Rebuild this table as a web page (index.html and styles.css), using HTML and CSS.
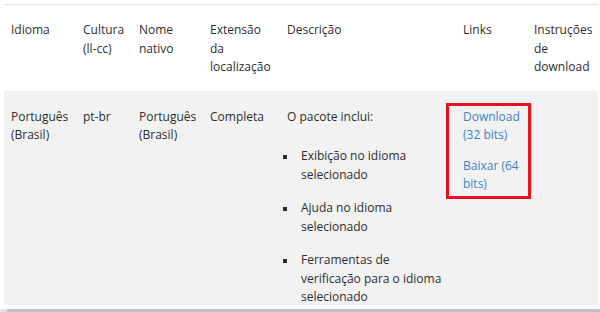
FILE: index.html
```html
<!DOCTYPE html>
<html lang="pt-BR">
<head>
<meta charset="utf-8">
<title>Pacotes de idiomas</title>
<link rel="stylesheet" href="styles.css">
</head>
<body>
<div class="page">
  <div class="viewport">
    <table class="lang-table">
      <colgroup>
        <col class="c-idioma">
        <col class="c-cultura">
        <col class="c-nome">
        <col class="c-ext">
        <col class="c-desc">
        <col class="c-links">
        <col class="c-instr">
      </colgroup>
      <thead>
        <tr>
          <th>Idioma</th>
          <th>Cultura (ll-cc)</th>
          <th>Nome nativo</th>
          <th>Extensão da localização</th>
          <th>Descrição</th>
          <th>Links</th>
          <th>Instruções de download</th>
        </tr>
      </thead>
      <tbody>
        <tr class="row-alt">
          <td>Português (Brasil)</td>
          <td>pt-br</td>
          <td>Português (Brasil)</td>
          <td>Completa</td>
          <td>
            <p class="desc-intro">O pacote inclui:</p>
            <ul class="desc-list">
              <li>Exibição no idioma selecionado</li>
              <li>Ajuda no idioma selecionado</li>
              <li>Ferramentas de verificação para o idioma selecionado</li>
            </ul>
          </td>
          <td class="links-cell">
            <div class="highlight"></div>
            <a class="dl-link" href="#">Download (32 bits)</a>
            <a class="dl-link" href="#">Baixar (64 bits)</a>
          </td>
          <td></td>
        </tr>
      </tbody>
    </table>
  </div>
  <div class="gap"></div>
  <div class="bottom-bar"><span class="bar-left"></span><span class="bar-main"></span></div>
</div>
</body>
</html>
```

FILE: styles.css
```css
html, body {
  margin: 0;
  padding: 0;
  background: #ffffff;
}
.page {
  width: 600px;
  height: 312px;
  overflow: hidden;
  display: flex;
  flex-direction: column;
}
.viewport {
  box-sizing: border-box;
  height: 305px;
  overflow: hidden;
  padding: 4px 2px 0 4px;
  flex: none;
}
.lang-table {
  width: 594px;
  border-collapse: collapse;
  table-layout: fixed;
  font-family: "Open Sans", "Noto Sans", sans-serif;
  font-size: 12px;
  line-height: 18.5px;
  color: #2e2e2e;
  border-top: 1px solid #e3e3e3;
}
.c-idioma { width: 72px; }
.c-cultura { width: 56px; }
.c-nome { width: 71px; }
.c-ext { width: 77px; }
.c-desc { width: 176px; }
.c-links { width: 71px; }
.c-instr { width: 71px; }
.lang-table th,
.lang-table td {
  text-align: left;
  vertical-align: top;
  font-weight: 400;
  padding: 16px 7px 14px 7px;
}
.row-alt td {
  background: #f2f2f2;
  padding-top: 17px;
  padding-bottom: 40px;
}
.desc-intro {
  margin: 0 0 21px 0;
}
.desc-list {
  list-style: none;
  margin: 0 0 0 -4px;
  padding: 0;
}
.desc-list li {
  display: grid;
  grid-template-columns: 18px 1fr;
  margin-bottom: 15px;
}
.desc-list li::before {
  content: "";
  width: 4px;
  height: 4px;
  background: #2b2b2b;
  margin-top: 8px;
}
.links-cell {
  position: relative;
}
.dl-link {
  display: block;
  color: #3c84c6;
  text-decoration: none;
  margin-bottom: 12px;
}
.highlight {
  position: absolute;
  left: -10px;
  top: 12px;
  width: 79px;
  height: 90px;
  border: 3px solid #e8101e;
}
.gap {
  height: 4px;
  flex: none;
}
.bottom-bar {
  display: flex;
  height: 3px;
  flex: none;
}
.bar-left {
  width: 7px;
  background: #dde2ea;
}
.bar-main {
  flex: 1;
  background: #b9c3d1;
}
```
